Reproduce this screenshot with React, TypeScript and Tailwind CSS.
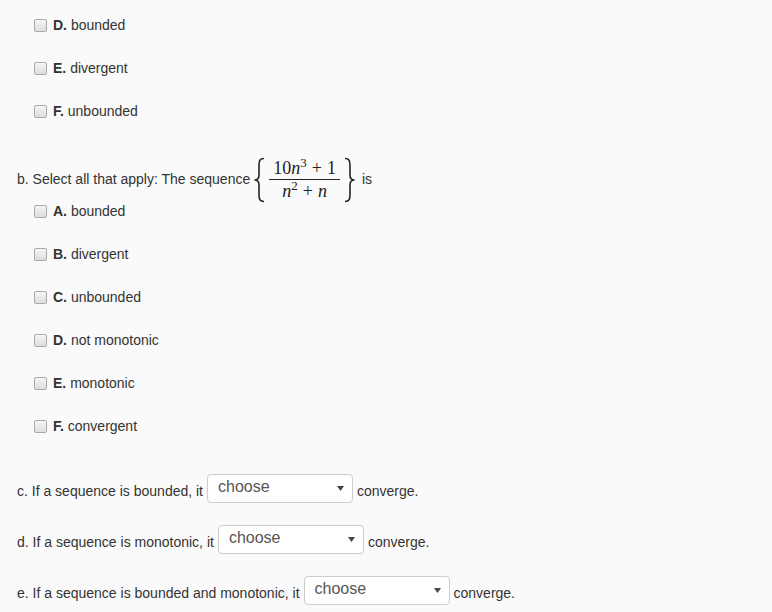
import React from "react";

const groupOne = [
  { key: "D.", label: "bounded" },
  { key: "E.", label: "divergent" },
  { key: "F.", label: "unbounded" },
];

const groupTwo = [
  { key: "A.", label: "bounded" },
  { key: "B.", label: "divergent" },
  { key: "C.", label: "unbounded" },
  { key: "D.", label: "not monotonic" },
  { key: "E.", label: "monotonic" },
  { key: "F.", label: "convergent" },
];

const questions = [
  { lead: "c. If a sequence is bounded, it" },
  { lead: "d. If a sequence is monotonic, it" },
  { lead: "e. If a sequence is bounded and monotonic, it" },
];

function Option({ k, label }: { k: string; label: string }) {
  return (
    <label className="flex items-center h-5 ml-[17px]">
      <span className="w-[13px] h-[13px] rounded-[2px] border border-[#a8a8a8] bg-gradient-to-b from-[#f6f6f6] to-[#dcdcdc] shadow-[inset_0_0_1px_#ffffff]" />
      <span className="ml-[6px]">
        <b>{k}</b> {label}
      </span>
    </label>
  );
}

function Brace({ flip }: { flip?: boolean }) {
  return (
    <svg width="13" height="46" viewBox="0 0 13 46" className={flip ? "-scale-x-100" : ""}>
      <path
        d="M11,1.5 C6.5,1.5 6,4 6,9 L6,18 C6,21.5 4.5,23 1.5,23 C4.5,23 6,24.5 6,28 L6,37 C6,42 6.5,44.5 11,44.5"
        fill="none"
        stroke="#222"
        strokeWidth="1.6"
      />
    </svg>
  );
}

function Choose() {
  return (
    <div className="flex items-center justify-between w-[146px] h-[29px] mx-[4px] border border-[#cccccc] rounded-[4px] bg-white pl-[10px] pr-[8px]">
      <span className="text-[16px] text-[#555555] -mt-[4px]">choose</span>
      <svg width="7" height="5" viewBox="0 0 7 5">
        <path d="M0,0 L7,0 L3.5,5 Z" fill="#444" />
      </svg>
    </div>
  );
}

export default function App() {
  return (
    <div className="min-h-screen bg-[#fafafa] text-[14px] text-[#333333] font-['Liberation_Sans',Arial,sans-serif] pl-[17px] pt-[15px]">
      <div className="flex flex-col gap-[23px]">
        {groupOne.map((o) => (
          <Option key={o.key} k={o.key} label={o.label} />
        ))}
      </div>

      <div className="flex items-center h-[43px] mt-[37px]">
        <span>b. Select all that apply: The sequence</span>
        <span className="flex items-center ml-[3px] font-['Liberation_Serif',serif] text-[18px] text-[#222]">
          <Brace />
          <span className="flex flex-col items-center mx-[3px]">
            <span className="leading-[21px] border-b border-[#222] px-[4px]">
              10<i>n</i>
              <sup className="text-[13px]">3</sup>
              <span className="mx-[5px]">+</span>1
            </span>
            <span className="leading-[21px] pt-[1px]">
              <i>n</i>
              <sup className="text-[13px]">2</sup>
              <span className="mx-[5px]">+</span>
              <i>n</i>
            </span>
          </span>
          <Brace flip />
        </span>
        <span className="ml-[6px]">is</span>
      </div>

      <div className="flex flex-col gap-[23px]">
        {groupTwo.map((o) => (
          <Option key={o.key + o.label} k={o.key} label={o.label} />
        ))}
      </div>

      <div className="flex flex-col gap-[22px] mt-[38px]">
        {questions.map((q) => (
          <div key={q.lead} className="flex items-center h-[29px]">
            <span className="pt-[5px]">{q.lead}</span>
            <Choose />
            <span className="pt-[5px]">converge.</span>
          </div>
        ))}
      </div>
    </div>
  );
}
